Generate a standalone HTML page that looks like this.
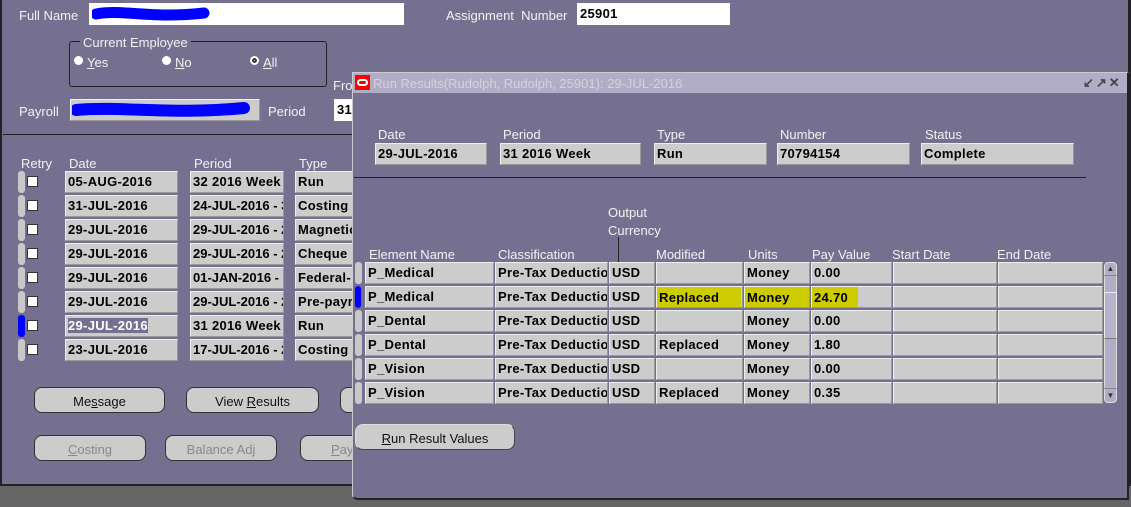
<!DOCTYPE html>
<html><head><meta charset="utf-8"><style>
*{margin:0;padding:0;box-sizing:border-box}
body{width:1131px;height:507px;background:#757090;position:relative;overflow:hidden;font-family:"Liberation Sans",sans-serif}
.a{position:absolute}
.l{position:absolute;color:#f2f2f2;font-size:13px;white-space:nowrap}
.f{position:absolute;background:#cccccc;border:1px solid #eee;border-right-color:#999;border-bottom-color:#999;font-weight:bold;font-size:13px;color:#000;padding:2px 0 0 2px;white-space:nowrap;overflow:hidden;height:22px;letter-spacing:.3px}
.w{background:#fff;border:1px solid #fff}
.cb{position:absolute;width:11px;height:11px;background:#fff;border:1px solid #333}
.ind{position:absolute;width:7px;height:22px;background:#c8c8c8;border-radius:3px}
.btn{position:absolute;background:#cccccc;border:1px solid #333;border-radius:8px;font-size:13px;text-align:center;padding-top:6px;color:#111;height:26px}
.dis{color:#888}
.y{background:#cccc00}
</style></head><body>
<div class="a" style="left:0;top:0;width:2px;height:484px;background:#222"></div>
<div class="a" style="left:0;top:484px;width:1131px;height:23px;background:#666;border-top:2px solid #222"></div>
<div class="l" style="left:19px;top:8px">Full Name</div>
<div class="f w" style="left:89px;top:3px;width:315px"></div>
<svg class="a" style="left:92px;top:5px" width="120" height="18"><path d="M4 9 C30 4,60 14,112 8" stroke="#0000ff" stroke-width="11" fill="none" stroke-linecap="round"/></svg>
<div class="l" style="left:446px;top:8px">Assignment&nbsp; Number</div>
<div class="f w" style="left:577px;top:3px;width:153px">25901</div>
<div class="a" style="left:69px;top:41px;width:258px;height:46px;border:1px solid #222;border-radius:3px"></div>
<div class="l" style="left:80px;top:35px;background:#757090;padding:0 3px">Current Employee</div>
<div class="a" style="left:74px;top:56px;width:9px;height:9px;border-radius:50%;background:#fff"></div>
<div class="l" style="left:87px;top:55px"><u>Y</u>es</div>
<div class="a" style="left:162px;top:56px;width:9px;height:9px;border-radius:50%;background:#fff"></div>
<div class="l" style="left:175px;top:55px"><u>N</u>o</div>
<div class="a" style="left:250px;top:56px;width:9px;height:9px;border-radius:50%;background:#fff;border:2px solid #fff;box-shadow:inset 0 0 0 2px #333"></div>
<div class="l" style="left:263px;top:55px"><u>A</u>ll</div>
<div class="l" style="left:333px;top:78px">Fro</div>
<div class="l" style="left:19px;top:104px">Payroll</div>
<div class="f" style="left:70px;top:99px;width:190px"></div>
<svg class="a" style="left:72px;top:101px" width="180" height="18"><path d="M4 9 C50 5,100 14,172 7" stroke="#0000ff" stroke-width="12" fill="none" stroke-linecap="round"/></svg>
<div class="l" style="left:268px;top:104px">Period</div>
<div class="f w" style="left:334px;top:99px;width:30px">31</div>
<div class="a" style="left:3px;top:134px;width:350px;height:1px;background:#222"></div>
<div class="l" style="left:21px;top:156px">Retry</div>
<div class="l" style="left:69px;top:156px">Date</div>
<div class="l" style="left:194px;top:156px">Period</div>
<div class="l" style="left:299px;top:156px">Type</div>

<div class="ind" style="left:18px;top:171px"></div><div class="cb" style="left:27px;top:176px"></div>
<div class="f" style="left:65px;top:171px;width:113px">05-AUG-2016</div><div class="f" style="left:190px;top:171px;width:94px">32 2016 Week</div><div class="f" style="left:295px;top:171px;width:70px">Run</div>
<div class="ind" style="left:18px;top:195px"></div><div class="cb" style="left:27px;top:200px"></div>
<div class="f" style="left:65px;top:195px;width:113px">31-JUL-2016</div><div class="f" style="left:190px;top:195px;width:94px;letter-spacing:0">24-JUL-2016 - 3</div><div class="f" style="left:295px;top:195px;width:70px">Costing</div>
<div class="ind" style="left:18px;top:219px"></div><div class="cb" style="left:27px;top:224px"></div>
<div class="f" style="left:65px;top:219px;width:113px">29-JUL-2016</div><div class="f" style="left:190px;top:219px;width:94px;letter-spacing:0">29-JUL-2016 - 2</div><div class="f" style="left:295px;top:219px;width:70px">Magnetic</div>
<div class="ind" style="left:18px;top:243px"></div><div class="cb" style="left:27px;top:248px"></div>
<div class="f" style="left:65px;top:243px;width:113px">29-JUL-2016</div><div class="f" style="left:190px;top:243px;width:94px;letter-spacing:0">29-JUL-2016 - 2</div><div class="f" style="left:295px;top:243px;width:70px">Cheque</div>
<div class="ind" style="left:18px;top:267px"></div><div class="cb" style="left:27px;top:272px"></div>
<div class="f" style="left:65px;top:267px;width:113px">29-JUL-2016</div><div class="f" style="left:190px;top:267px;width:94px;letter-spacing:0">01-JAN-2016 - 2</div><div class="f" style="left:295px;top:267px;width:70px">Federal-</div>
<div class="ind" style="left:18px;top:291px"></div><div class="cb" style="left:27px;top:296px"></div>
<div class="f" style="left:65px;top:291px;width:113px">29-JUL-2016</div><div class="f" style="left:190px;top:291px;width:94px;letter-spacing:0">29-JUL-2016 - 2</div><div class="f" style="left:295px;top:291px;width:70px">Pre-payr</div>
<div class="ind" style="left:18px;top:315px;background:#0000ff"></div><div class="cb" style="left:27px;top:320px"></div>
<div class="f" style="left:65px;top:315px;width:113px"><span style="background:#757090;color:#fff">29-JUL-2016</span></div><div class="f" style="left:190px;top:315px;width:94px">31 2016 Week</div><div class="f" style="left:295px;top:315px;width:70px">Run</div>
<div class="ind" style="left:18px;top:339px"></div><div class="cb" style="left:27px;top:344px"></div>
<div class="f" style="left:65px;top:339px;width:113px">23-JUL-2016</div><div class="f" style="left:190px;top:339px;width:94px;letter-spacing:0">17-JUL-2016 - 2</div><div class="f" style="left:295px;top:339px;width:70px">Costing</div>

<div class="btn" style="left:34px;top:387px;width:131px">Me<u>s</u>sage</div>
<div class="btn" style="left:186px;top:387px;width:133px">View <u>R</u>esults</div>
<div class="btn" style="left:340px;top:387px;width:40px"></div>
<div class="btn dis" style="left:34px;top:435px;width:112px"><u>C</u>osting</div>
<div class="btn dis" style="left:165px;top:435px;width:112px">Balance Adj</div>
<div class="btn dis" style="left:300px;top:435px;width:80px;text-align:left;padding-left:30px"><u>P</u>ay</div>
<div class="a" style="left:1128px;top:0;width:3px;height:484px;background:#222"></div>

<div class="a" style="left:352px;top:72px;width:777px;height:428px;background:#757090;border:1px solid #ccc;border-right:2px solid #222;border-bottom:2px solid #222;border-radius:0 0 0 6px"></div>
<div class="a" style="left:353px;top:73px;width:774px;height:20px;background:#b2adc6"></div>
<div class="a" style="left:355px;top:75px;width:15px;height:15px;background:#ff0000"></div>
<div class="a" style="left:357px;top:79px;width:11px;height:7px;border:2px solid #fff;border-radius:4px"></div>
<div class="a" style="left:373px;top:76px;color:#d4d2de;font-size:13px;white-space:nowrap">Run Results(Rudolph, Rudolph, 25901): 29-JUL-2016</div>
<div class="a" style="left:1083px;top:75px;color:#444;font-size:13px;font-weight:bold;letter-spacing:2px">&#8601;&#8599;&#10005;</div>

<div class="l" style="left:378px;top:127px">Date</div>
<div class="l" style="left:503px;top:127px">Period</div>
<div class="l" style="left:657px;top:127px">Type</div>
<div class="l" style="left:780px;top:127px">Number</div>
<div class="l" style="left:925px;top:127px">Status</div>
<div class="f" style="left:375px;top:143px;width:112px">29-JUL-2016</div>
<div class="f" style="left:500px;top:143px;width:141px">31 2016 Week</div>
<div class="f" style="left:654px;top:143px;width:113px">Run</div>
<div class="f" style="left:777px;top:143px;width:133px">70794154</div>
<div class="f" style="left:921px;top:143px;width:153px">Complete</div>
<div class="a" style="left:354px;top:177px;width:732px;height:1px;background:#222"></div>

<div class="l" style="left:608px;top:205px">Output</div>
<div class="l" style="left:608px;top:223px">Currency</div>
<div class="a" style="left:618px;top:237px;width:1px;height:25px;background:#222"></div>
<div class="l" style="left:369px;top:247px">Element Name</div>
<div class="l" style="left:498px;top:247px">Classification</div>
<div class="l" style="left:656px;top:247px">Modified</div>
<div class="l" style="left:748px;top:247px">Units</div>
<div class="l" style="left:812px;top:247px">Pay Value</div>
<div class="l" style="left:892px;top:247px">Start Date</div>
<div class="l" style="left:997px;top:247px">End Date</div>

<div class="ind" style="left:355px;top:262px"></div>
<div class="f" style="left:365px;top:262px;width:129px">P_Medical</div><div class="f" style="left:495px;top:262px;width:113px">Pre-Tax Deductio</div><div class="f" style="left:609px;top:262px;width:46px">USD</div><div class="f" style="left:656px;top:262px;width:87px"></div><div class="f" style="left:744px;top:262px;width:66px">Money</div><div class="f" style="left:811px;top:262px;width:81px">0.00</div><div class="f" style="left:893px;top:262px;width:104px"></div><div class="f" style="left:998px;top:262px;width:105px"></div>
<div class="ind" style="left:355px;top:286px;background:#0000ff;width:6px"></div>
<div class="f" style="left:365px;top:286px;width:129px">P_Medical</div><div class="f" style="left:495px;top:286px;width:113px">Pre-Tax Deductio</div><div class="f" style="left:609px;top:286px;width:46px">USD</div><div class="f" style="left:656px;top:286px;width:87px;padding:0"><span class="y" style="display:inline-block;padding:3px 22px 2px 2px">Replaced</span></div><div class="f" style="left:744px;top:286px;width:66px;padding:0"><span class="y" style="display:inline-block;padding:3px 20px 2px 2px">Money</span></div><div class="f" style="left:811px;top:286px;width:81px;padding:0"><span class="y" style="display:inline-block;padding:3px 10px 2px 2px">24.70</span></div><div class="f" style="left:893px;top:286px;width:104px"></div><div class="f" style="left:998px;top:286px;width:105px"></div>
<div class="ind" style="left:355px;top:310px"></div>
<div class="f" style="left:365px;top:310px;width:129px">P_Dental</div><div class="f" style="left:495px;top:310px;width:113px">Pre-Tax Deductio</div><div class="f" style="left:609px;top:310px;width:46px">USD</div><div class="f" style="left:656px;top:310px;width:87px"></div><div class="f" style="left:744px;top:310px;width:66px">Money</div><div class="f" style="left:811px;top:310px;width:81px">0.00</div><div class="f" style="left:893px;top:310px;width:104px"></div><div class="f" style="left:998px;top:310px;width:105px"></div>
<div class="ind" style="left:355px;top:334px"></div>
<div class="f" style="left:365px;top:334px;width:129px">P_Dental</div><div class="f" style="left:495px;top:334px;width:113px">Pre-Tax Deductio</div><div class="f" style="left:609px;top:334px;width:46px">USD</div><div class="f" style="left:656px;top:334px;width:87px">Replaced</div><div class="f" style="left:744px;top:334px;width:66px">Money</div><div class="f" style="left:811px;top:334px;width:81px">1.80</div><div class="f" style="left:893px;top:334px;width:104px"></div><div class="f" style="left:998px;top:334px;width:105px"></div>
<div class="ind" style="left:355px;top:358px"></div>
<div class="f" style="left:365px;top:358px;width:129px">P_Vision</div><div class="f" style="left:495px;top:358px;width:113px">Pre-Tax Deductio</div><div class="f" style="left:609px;top:358px;width:46px">USD</div><div class="f" style="left:656px;top:358px;width:87px"></div><div class="f" style="left:744px;top:358px;width:66px">Money</div><div class="f" style="left:811px;top:358px;width:81px">0.00</div><div class="f" style="left:893px;top:358px;width:104px"></div><div class="f" style="left:998px;top:358px;width:105px"></div>
<div class="ind" style="left:355px;top:382px"></div>
<div class="f" style="left:365px;top:382px;width:129px">P_Vision</div><div class="f" style="left:495px;top:382px;width:113px">Pre-Tax Deductio</div><div class="f" style="left:609px;top:382px;width:46px">USD</div><div class="f" style="left:656px;top:382px;width:87px">Replaced</div><div class="f" style="left:744px;top:382px;width:66px">Money</div><div class="f" style="left:811px;top:382px;width:81px">0.35</div><div class="f" style="left:893px;top:382px;width:104px"></div><div class="f" style="left:998px;top:382px;width:105px"></div>

<div class="a" style="left:1104px;top:262px;width:13px;height:141px;background:#b2adc6;border:1px solid #ddd;border-radius:4px"></div>
<div class="a" style="left:1104px;top:262px;width:13px;height:14px;border-bottom:1px solid #888;font-size:8px;color:#333;text-align:center;line-height:13px">&#9650;</div>
<div class="a" style="left:1104px;top:292px;width:13px;height:47px;background:#b8b3cc;border:1px solid #eee;border-bottom-color:#777"></div>
<div class="a" style="left:1104px;top:388px;width:13px;height:14px;border-top:1px solid #888;font-size:8px;color:#333;text-align:center;line-height:13px">&#9660;</div>

<div class="btn" style="left:355px;top:424px;width:160px;border-color:#ddd;border-right-color:#444;border-bottom-color:#444"><u>R</u>un Result Values</div>
</body></html>
